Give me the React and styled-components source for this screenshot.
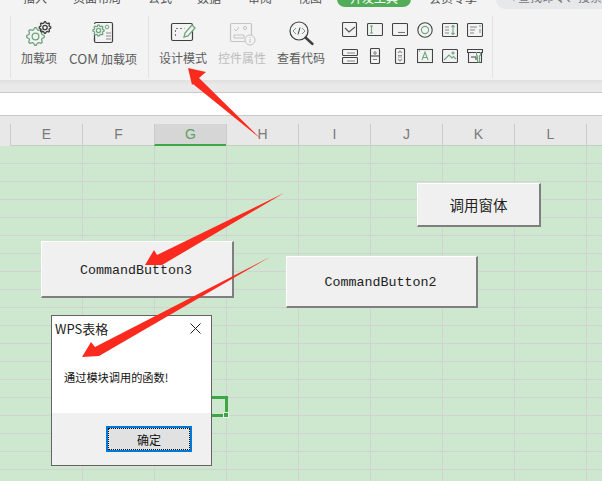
import React from 'react'
import styled, { createGlobalStyle } from 'styled-components'

const GlobalStyle = createGlobalStyle`
  html, body { margin: 0; padding: 0; background: #f3f3f3; }
  body { font-family: "Noto Sans CJK SC", "Liberation Sans", sans-serif; }
`

const Page = styled.div`
  position: relative;
  width: 602px;
  height: 481px;
  overflow: hidden;
  display: flex;
  flex-direction: column;
`

/* ribbon */
const Ribbon = styled.div`
  height: 80px;
  background: #f3f3f3;
  flex-shrink: 0;
`
const TabBar = styled.div`
  position: relative;
  height: 10px;
  display: flex;
  padding-left: 23px;
  overflow: hidden;
`
const Tab = styled.div`
  width: ${({ $w }) => $w}px;
  margin-top: -10px;
  font-size: 12px;
  line-height: 16px;
  color: #555;
  flex-shrink: 0;
  white-space: nowrap;
`
const ActiveTab = styled.div`
  width: 74px;
  height: 16px;
  margin: -9px 18px 0 -9px;
  flex-shrink: 0;
  border-radius: 8px;
  background: #52ad58;
  color: #fff;
  font-size: 12px;
  line-height: 14px;
  text-align: center;
`
const SearchBox = styled.div`
  width: 130px;
  height: 18px;
  margin: -9px 0 0 19px;
  flex-shrink: 0;
  box-sizing: border-box;
  display: flex;
  align-items: center;
  gap: 3px;
  padding: 0 0 7px 10px;
  border-radius: 9px;
  background: #e7e8ea;
  color: #777;
  font-size: 12px;
  white-space: nowrap;
  overflow: hidden;
`
const Tools = styled.div`
  height: 62px;
  margin-top: 6px;
  display: flex;
  padding-left: 10px;
`
const Group = styled.div`
  width: ${({ $w }) => $w}px;
  flex-shrink: 0;
  box-sizing: border-box;
  height: 62px;
  border-left: 1px solid #e2e2e2;
  display: flex;
  ${({ $last }) => $last && 'border-right: 1px solid #e2e2e2;'}
`
const Tool = styled.div`
  width: ${({ $w }) => $w}px;
  margin-left: ${({ $ml }) => $ml || 0}px;
  flex-shrink: 0;
  display: flex;
  flex-direction: column;
  align-items: center;
  color: ${({ $off }) => ($off ? '#bdbdbd' : '#5c5c5c')};
`
const ToolIcon = styled.svg`
  display: block;
  width: 32px;
  height: 32px;
  margin-top: 4px;
`
const ToolLabel = styled.span`
  font-size: 12px;
  line-height: 18px;
  margin-top: -3px;
  white-space: nowrap;
`
const Latin = styled.span`
  font-size: 13.5px;
`
const MiniGrid = styled.div`
  display: grid;
  grid-template-columns: repeat(6, 15px);
  grid-auto-rows: 16px;
  column-gap: 10px;
  row-gap: 10px;
  margin: 6px 0 0 ${({ $ml }) => $ml}px;
`
const MiniIcon = styled.svg`
  display: block;
  width: 16px;
  height: 16px;
`

/* strip under the ribbon and formula bar */
const RibbonShade = styled.div`
  height: 13px;
  flex-shrink: 0;
  box-sizing: border-box;
  background: linear-gradient(#e0e0e0, #e9e9e9 40%);
  border-bottom: 1px solid #c9c9c9;
`
const FormulaBar = styled.div`
  height: 23px;
  flex-shrink: 0;
  box-sizing: border-box;
  background: #fff;
  border-bottom: 1px solid #c9c9c9;
`

/* sheet */
const Headers = styled.div`
  height: 30px;
  flex-shrink: 0;
  display: flex;
  box-sizing: border-box;
  padding: 8px 0 0 10px;
  background: #e8e8e8;
`
const ColHead = styled.div`
  width: 72px;
  flex-shrink: 0;
  box-sizing: border-box;
  height: 22px;
  border-left: 1px solid #cbcbcb;
  border-bottom: ${({ $active }) => ($active ? '2px solid #3fa648' : '1px solid #c4cec4')};
  text-align: center;
  font-family: "Liberation Sans", sans-serif;
  font-size: 14px;
  line-height: 21px;
  color: ${({ $active }) => ($active ? '#5fa05f' : '#7a7a7a')};
  background: ${({ $active }) => ($active ? '#d6d6d6' : 'transparent')};
`
const Sheet = styled.div`
  position: relative;
  flex: 1;
  background-color: #cde8cf;
  background-image:
    repeating-linear-gradient(90deg, transparent 0 71px, #d2d2d2 71px 72px),
    repeating-linear-gradient(180deg, transparent 0 17px, #d2d2d2 17px 18px);
  background-position: 11px 0, 0 0;
`
const SheetButton = styled.div`
  position: absolute;
  left: ${({ $x }) => $x}px;
  top: ${({ $y }) => $y}px;
  width: ${({ $w }) => $w}px;
  height: ${({ $h }) => $h}px;
  box-sizing: border-box;
  display: flex;
  align-items: center;
  justify-content: center;
  ${({ $cjk }) => !$cjk && 'padding: 2px 2px 0 0;'}
  background: #f0f0f0;
  border-top: 1px solid #fff;
  border-left: 1px solid #fff;
  border-right: 2px solid #7f7f7f;
  border-bottom: 2px solid #7f7f7f;
  color: #222;
  font-family: ${({ $cjk }) => ($cjk ? '"Noto Sans CJK SC", sans-serif' : '"Liberation Mono", monospace')};
  font-size: ${({ $cjk }) => ($cjk ? '14.5px' : '13.33px')};
`
const Selection = styled.div`
  position: absolute;
  left: 152px;
  top: 250px;
  width: 76px;
  height: 21px;
  box-sizing: border-box;
  border: 3px solid #3fa648;
  &::after {
    content: '';
    position: absolute;
    right: -4px;
    bottom: -4px;
    width: 6px;
    height: 6px;
    background: #3fa648;
    border: 1px solid #e6f3e6;
    box-sizing: border-box;
  }
`

/* message box */
const Dialog = styled.div`
  position: absolute;
  left: 51px;
  top: 169px;
  width: 161px;
  height: 151px;
  box-sizing: border-box;
  border: 1px solid #646464;
  background: #fff;
  display: flex;
  flex-direction: column;
`
const DialogTitle = styled.div`
  height: 24px;
  flex-shrink: 0;
  display: flex;
  align-items: center;
  justify-content: space-between;
  padding: 0 10px 0 3px;
  font-size: 13px;
  color: #222;
`
const DialogBody = styled.div`
  flex: 1;
  padding: 27px 0 0 12px;
  font-size: 11.2px;
  line-height: 20px;
  color: #111;
`
const DialogFooter = styled.div`
  height: 52px;
  flex-shrink: 0;
  box-sizing: border-box;
  padding: 13px 0 0 54px;
  background: #f0f0f0;
`
const OkButton = styled.div`
  width: 86px;
  height: 26px;
  box-sizing: border-box;
  border: 2px solid #0078d7;
  background: #e1e1e1;
  outline: 1px dotted #111;
  outline-offset: -3px;
  display: flex;
  align-items: center;
  justify-content: center;
  font-size: 12px;
  color: #111;
`
const Arrows = styled.svg`
  position: absolute;
  left: 0;
  top: 0;
  width: 602px;
  height: 481px;
  pointer-events: none;
`

const DARK = '#3f3f3f'
const GREEN = '#6fa67f'

const gearPath = (cx, cy, r) => {
  const teeth = 8
  const inn = r * 0.78
  let d = ''
  for (let i = 0; i < teeth * 4; i++) {
    const a = (i / (teeth * 4)) * Math.PI * 2 - Math.PI / teeth / 4
    const rad = i % 4 < 2 ? r : inn
    d += `${i ? 'L' : 'M'}${(cx + rad * Math.cos(a)).toFixed(2)} ${(cy + rad * Math.sin(a)).toFixed(2)}`
  }
  return d + 'Z'
}

const Gear = ({ cx, cy, r, color }) => (
  <g fill="none" stroke={color} strokeWidth="1.3">
    <path d={gearPath(cx, cy, r)} strokeLinejoin="round" />
    <circle cx={cx} cy={cy} r={r * 0.38} />
  </g>
)

const AddinIcon = () => (
  <ToolIcon viewBox="0 0 32 32">
    <Gear cx={12.5} cy={16.5} r={8.8} color={GREEN} />
    <Gear cx={22} cy={7.5} r={5.8} color={DARK} />
  </ToolIcon>
)

const ComIcon = () => (
  <ToolIcon viewBox="0 0 32 32">
    <rect x="7.5" y="2.5" width="18" height="20" rx="1.5" fill="none" stroke={DARK} strokeWidth="1.2" />
    <path d="M19 13h5M19 16h5M19 19h5" stroke="#888" fill="none" />
    <circle cx="20" cy="7" r="1.8" fill="none" stroke={GREEN} />
    <path fill="#f3f3f3" d="M5 4h12v14H5z" />
    <path d="M7.5 15v6" stroke={DARK} strokeWidth="1.2" />
    <Gear cx={11.5} cy={10.5} r={5.6} color={GREEN} />
  </ToolIcon>
)

const DesignIcon = () => (
  <ToolIcon viewBox="0 0 32 32">
    <rect x="4.5" y="3.5" width="21" height="17" rx="1.5" fill="none" stroke={DARK} strokeWidth="1.2" />
    <path d="M8.5 16v-7.5h9" fill="none" stroke="#777" strokeDasharray="2 2" />
    <path d="M17 17l1-4 7-8 3 3-7 8z" fill="#f3f3f3" stroke={GREEN} strokeWidth="1.3" />
  </ToolIcon>
)

const PropsIcon = () => (
  <ToolIcon viewBox="0 0 32 32">
    <rect x="4.5" y="3.5" width="21" height="18" rx="1.5" fill="none" stroke="#c4c4c4" strokeWidth="1.2" />
    <path d="M8 9l2 2 3-4M8 15h10v3H8z" fill="none" stroke="#c4c4c4" />
    <circle cx="19" cy="8" r="1.6" fill="none" stroke="#c4c4c4" />
    <circle cx="24" cy="20" r="5" fill="#f3f3f3" stroke="#c4c4c4" />
    <path d="M24 19v4M24 17v1" stroke="#c4c4c4" />
  </ToolIcon>
)

const CodeIcon = () => (
  <ToolIcon viewBox="0 0 32 32">
    <circle cx="14" cy="11" r="9" fill="none" stroke={DARK} strokeWidth="1.2" />
    <path d="M20.5 17.5l7 6.5" stroke={DARK} strokeWidth="2.4" strokeLinecap="round" />
    <path d="M11 8l-3 3 3 3M17 8l3 3-3 3" fill="none" stroke={GREEN} />
    <path d="M15 7.5l-2 7" stroke={DARK} />
  </ToolIcon>
)

const miniIcons = [
  <><rect x=".5" y=".5" width="14" height="14" rx="1" /><path d="M3 6l4 4 6-5" stroke="#555" /></>,
  <><rect x=".5" y="1.5" width="15" height="12" rx="1" /><path d="M3 4h3M3 11h3M4.5 4v7" stroke={GREEN} /></>,
  <><rect x=".5" y="1.5" width="15" height="12" rx="1" /><path d="M6 10.5h7" stroke="#777" /></>,
  <><circle cx="8" cy="8" r="7.2" /><circle cx="8" cy="8" r="3.6" stroke={GREEN} /></>,
  <><rect x=".5" y="1.5" width="15" height="13" rx="1" /><path d="M3 5h4M3 8h4M3 11h4" stroke="#888" /><path d="M11 3.5v9M9.5 5L11 3.5 12.5 5M9.5 11l1.5 1.5 1.5-1.5" stroke={GREEN} /></>,
  <><rect x=".5" y="1.5" width="15" height="13" rx="1" /><path d="M3 5h7M3 8h5M3 11h4" stroke="#888" /><path d="M12 4h2M13 7v4" stroke={GREEN} /></>,
  <><rect x=".5" y="1.5" width="15" height="6" rx="1" /><rect x=".5" y="9.5" width="15" height="6" rx="1" /><path d="M5 5h8M5 13h8" stroke="#888" /></>,
  <><rect x="3.5" y=".5" width="9" height="15" rx="1" /><path d="M3.5 8h9" /><path d="M6 5h4M8 3v4M6 11.5h4" stroke="#888" /></>,
  <><rect x="3.5" y=".5" width="9" height="15" rx="1" /><path d="M6 5l2-2 2 2M6 11l2 2 2-2M6 7.5h4M6 9h4" stroke="#999" /></>,
  <><rect x=".5" y="1.5" width="15" height="13" /><path d="M5 12l3-8 3 8M6 9.5h4" stroke={GREEN} /><path d="M2 3h1" stroke="#777" /></>,
  <><rect x=".5" y="1.5" width="15" height="13" rx="1" /><path d="M2 12l5-5 3 3 1.5-1.5L14 11" stroke={GREEN} /><circle cx="11" cy="5" r="1" stroke={GREEN} /></>,
  <><path d="M.5 1.5h15v3h-1v10h-13v-10h-1zM1.5 4.5h13M4 9h5v3" /><path d="M9.5 4v3l1 1v6h2V8l1-1V4" stroke={GREEN} /></>,
]

// the last column only shows its left edge in the window
const columns = ['E', 'F', 'G', 'H', 'I', 'J', 'K', 'L', '']

export default function App() {
  return (
    <Page>
      <GlobalStyle />
      <Ribbon>
        <TabBar>
          <Tab $w={50}>插入</Tab>
          <Tab $w={75}>页面布局</Tab>
          <Tab $w={49}>公式</Tab>
          <Tab $w={51}>数据</Tab>
          <Tab $w={50}>审阅</Tab>
          <Tab $w={48}>视图</Tab>
          <ActiveTab>开发工具</ActiveTab>
          <Tab $w={48}>会员专享</Tab>
          <SearchBox>
            <svg width="12" height="12" viewBox="0 0 12 12" fill="none" stroke="#555">
              <circle cx="5" cy="5" r="4" />
              <path d="M8 8l3 3" />
            </svg>
            查找命令、搜索模板
          </SearchBox>
        </TabBar>
        <Tools>
          <Group $w={138}>
            <Tool $w={56}><AddinIcon /><ToolLabel>加载项</ToolLabel></Tool>
            <Tool $w={72}><ComIcon /><ToolLabel><Latin>COM</Latin> 加载项</ToolLabel></Tool>
          </Group>
          <Group $w={345} $last>
            <Tool $w={60} $ml={4}><DesignIcon /><ToolLabel>设计模式</ToolLabel></Tool>
            <Tool $w={60} $ml={-1} $off><PropsIcon /><ToolLabel>控件属性</ToolLabel></Tool>
            <Tool $w={56} $ml={1}><CodeIcon /><ToolLabel>查看代码</ToolLabel></Tool>
            <MiniGrid $ml={13}>
              {miniIcons.map((icon, i) => (
                <MiniIcon key={i} viewBox="0 0 16 16" fill="none" stroke="#444" strokeWidth="1.1">
                  {icon}
                </MiniIcon>
              ))}
            </MiniGrid>
          </Group>
        </Tools>
      </Ribbon>
      <RibbonShade />
      <FormulaBar />
      <Headers>
        {columns.map((c, i) => (
          <ColHead key={i} $active={c === 'G'}>{c}</ColHead>
        ))}
      </Headers>
      <Sheet>
        <Selection />
        <SheetButton $x={417} $y={37} $w={124} $h={44} $cjk>调用窗体</SheetButton>
        <SheetButton $x={41} $y={95} $w={193} $h={57}>CommandButton3</SheetButton>
        <SheetButton $x={286} $y={110} $w={192} $h={52}>CommandButton2</SheetButton>
        <Dialog>
          <DialogTitle>
            WPS表格
            <svg width="11" height="11" viewBox="0 0 11 11" stroke="#222" fill="none">
              <path d="M.5.5l10 10M10.5.5l-10 10" />
            </svg>
          </DialogTitle>
          <DialogBody>通过模块调用的函数!</DialogBody>
          <DialogFooter>
            <OkButton>确定</OkButton>
          </DialogFooter>
        </Dialog>
      </Sheet>
      <Arrows viewBox="0 0 602 481">
        <g fill="#fb2a1e">
          <polygon points="188,68 206,72 199,78 261,139 193,84 192,85" />
          <polygon points="284,193 162,265 145,265 154,250 157,255" />
          <polygon points="270,257 99,356 82,357 91,342 95,347" />
        </g>
      </Arrows>
    </Page>
  )
}
